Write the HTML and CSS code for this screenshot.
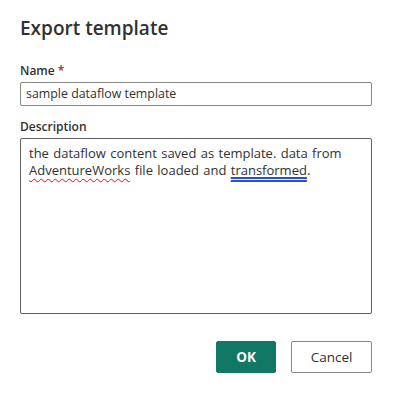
FILE: index.html
```html
<!DOCTYPE html>
<html>
<head>
<meta charset="utf-8">
<link rel="stylesheet" href="styles.css">
</head>
<body>
<div class="dialog">
  <h1 class="title">Export template</h1>
  <div class="field">
    <label class="label">Name <span class="req">*</span></label>
    <div class="input">sample dataflow template</div>
  </div>
  <div class="field">
    <label class="label">Description</label>
    <div class="textarea">the dataflow content saved as template. data from <span class="spell">AdventureWorks</span> file loaded and <span class="grammar">transformed</span>.</div>
  </div>
  <div class="actions">
    <button class="btn primary">OK</button>
    <button class="btn secondary">Cancel</button>
  </div>
</div>
</body>
</html>
```

FILE: styles.css
```css
html, body {
  margin: 0;
  padding: 0;
  background: #ffffff;
}
body {
  font-family: "Open Sans", "Noto Sans", sans-serif;
  color: #323130;
}
.dialog {
  width: 393px;
  box-sizing: border-box;
  padding: 14px 21px 0 20px;
}
.title {
  margin: 0 0 21px 0;
  font-size: 19px;
  line-height: 28px;
  font-weight: 600;
  color: #323130;
}
.field {
  display: flex;
  flex-direction: column;
  margin-bottom: 13px;
}
.label {
  font-size: 12px;
  font-weight: 600;
  line-height: 16px;
  margin-bottom: 3px;
  color: #323130;
}
.req {
  color: #a4262c;
}
.input {
  height: 24px;
  box-sizing: border-box;
  border: 1px solid #8a8886;
  border-radius: 2px;
  padding: 0 6px 0 5px;
  font-size: 12.4px;
  line-height: 22px;
  color: #323130;
}
.textarea {
  height: 176px;
  box-sizing: border-box;
  border: 1px solid #605e5c;
  border-radius: 2px;
  padding: 6px 8px;
  font-size: 13px;
  word-spacing: 1px;
  line-height: 17px;
  color: #323130;
}
.spell {
  text-decoration: underline wavy #e81123;
  text-decoration-thickness: 1px;
  text-underline-offset: 3px;
}
.grammar {
  text-decoration-line: underline;
  text-decoration-style: double;
  text-decoration-color: #2a4fd6;
  text-decoration-thickness: 1.5px;
  text-underline-offset: 2px;
}
.actions {
  display: flex;
  justify-content: flex-end;
  gap: 15px;
  margin-top: 27px;
}
.btn {
  height: 32px;
  box-sizing: border-box;
  border-radius: 2px;
  font-family: "Open Sans", "Noto Sans", sans-serif;
  font-size: 13.5px;
  padding: 0;
}
.primary {
  width: 60px;
  background: #117865;
  border: 1px solid #117865;
  color: #ffffff;
  font-weight: 700;
}
.secondary {
  width: 81px;
  background: #ffffff;
  border: 1px solid #8a8886;
  color: #323130;
  font-weight: 400;
}
```
